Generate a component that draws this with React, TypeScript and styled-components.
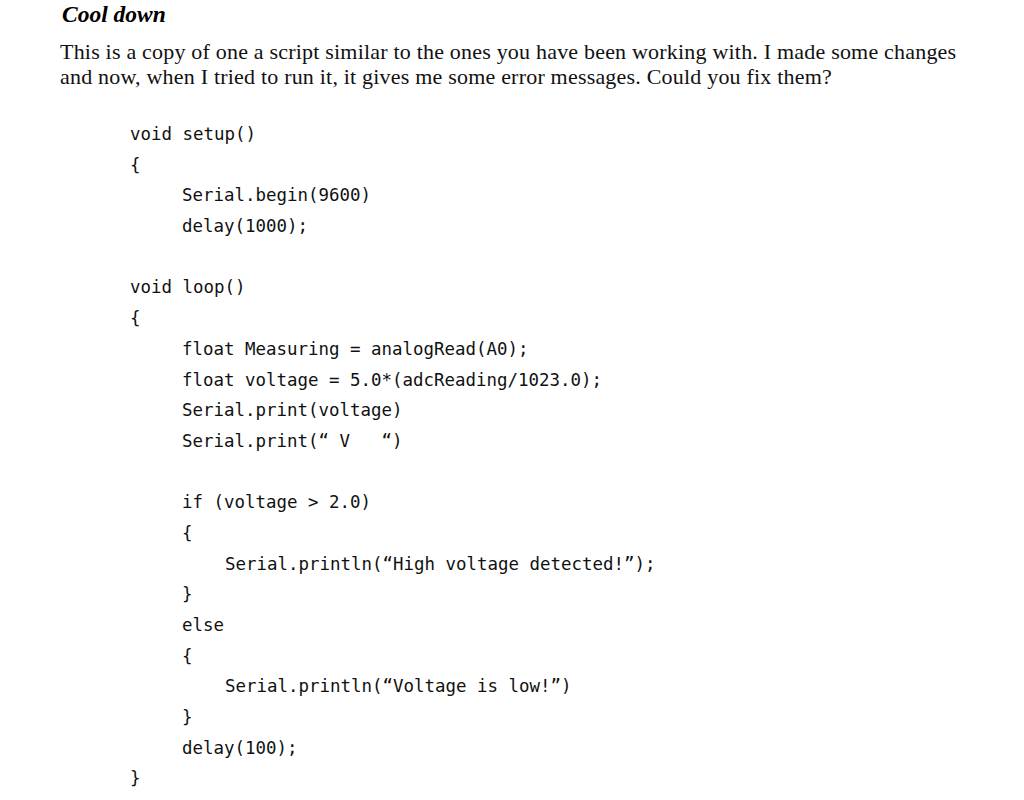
import React from "react";
import styled, { createGlobalStyle } from "styled-components";

const Global = createGlobalStyle`
  html, body { margin: 0; padding: 0; background: #ffffff; }
  body { color: #000; }
`;

const Page = styled.div`
  width: 1024px;
  min-height: 800px;
  box-sizing: border-box;
  padding: 0 40px 0 60px;
  display: flex;
  flex-direction: column;
`;

const Heading = styled.h1`
  margin: 0;
  padding: 2px 0 0 2px;
  font-family: "Liberation Serif", "Times New Roman", serif;
  font-style: italic;
  font-weight: 700;
  font-size: 23.5px;
  line-height: 24px;
  color: #000;
`;

const Para = styled.p`
  margin: 13px 0 0 0;
  font-family: "Liberation Serif", "Times New Roman", serif;
  font-size: 22px;
  letter-spacing: 0.2px;
  line-height: 25px;
  color: #111;
`;

const Code = styled.div`
  margin-top: 30px;
  padding-left: 70px;
  display: flex;
  flex-direction: column;
  font-family: "DejaVu Sans Mono", monospace;
  font-size: 17.45px;
  color: #111;
`;

const Line = styled.div<{ $level?: number }>`
  height: 30.7px;
  line-height: 30.7px;
  white-space: pre;
  padding-left: ${(p) => (p.$level === 2 ? 95 : p.$level === 1 ? 52 : 0)}px;
`;

const lines: [number, string][] = [
  [0, "void setup()"],
  [0, "{"],
  [1, "Serial.begin(9600)"],
  [1, "delay(1000);"],
  [0, ""],
  [0, "void loop()"],
  [0, "{"],
  [1, "float Measuring = analogRead(A0);"],
  [1, "float voltage = 5.0*(adcReading/1023.0);"],
  [1, "Serial.print(voltage)"],
  [1, "Serial.print(\u201C V   \u201C)"],
  [0, ""],
  [1, "if (voltage > 2.0)"],
  [1, "{"],
  [2, "Serial.println(\u201CHigh voltage detected!\u201D);"],
  [1, "}"],
  [1, "else"],
  [1, "{"],
  [2, "Serial.println(\u201CVoltage is low!\u201D)"],
  [1, "}"],
  [1, "delay(100);"],
  [0, "}"],
];

export default function App() {
  return (
    <Page>
      <Global />
      <Heading>Cool down</Heading>
      <Para>
        This is a copy of one a script similar to the ones you have been working with. I made some changes
        <br />
        and now, when I tried to run it, it gives me some error messages. Could you fix them?
      </Para>
      <Code>
        {lines.map(([lvl, text], i) => (
          <Line key={i} $level={lvl}>
            {text}
          </Line>
        ))}
      </Code>
    </Page>
  );
}
